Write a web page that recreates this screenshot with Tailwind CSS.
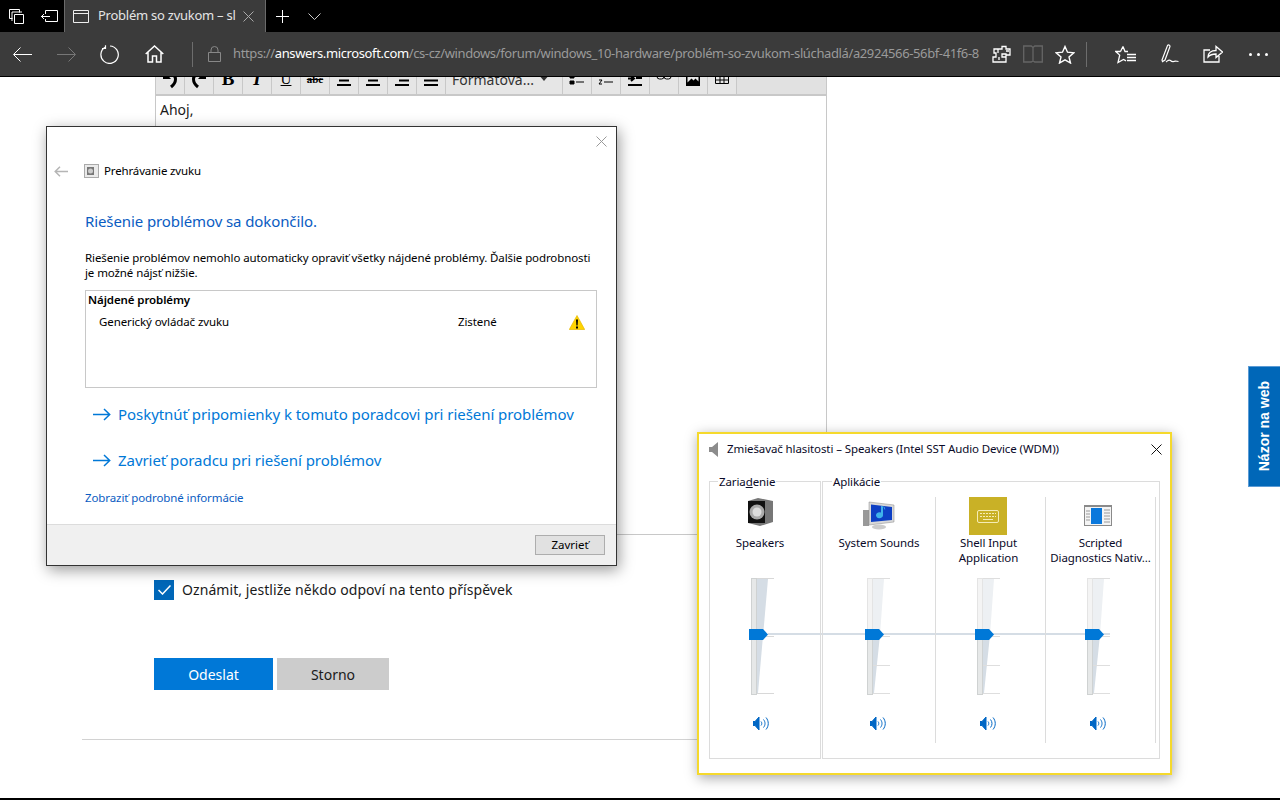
<!DOCTYPE html>
<html lang="sk">
  <head>
    <meta charset="UTF-8" />
    <title>Problém so zvukom</title>
    <script src="https://cdn.jsdelivr.net/npm/@tailwindcss/browser@4"></script>
  </head>
  <body class="w-[1280px] h-[800px] overflow-hidden bg-white font-['Noto_Sans',sans-serif] flex flex-col">
    <!-- TABS -->
    <div class="h-8 bg-black flex text-white shrink-0">
      <div class="w-16 flex items-center pl-[9px] gap-[17px]">
        <svg width="15" height="15" viewBox="0 0 15 15" fill="none" stroke="#fff"><path d="M.5 .5h10v3M.5 .5v9h3M3 3h10M3 3v9M5.500 5.500h9v9h-9z"/></svg>
        <svg width="17" height="13" viewBox="0 0 17 13" fill="none" stroke="#fff"><path d="M4.500 .5h12v11h-12V9M4.500 4V.5M0 6.500h9M3 4 .5 6.500 3 9"/></svg>
      </div>
      <div class="w-[202px] bg-[#3b3b3b] border-x border-[#6a6a6a] flex items-center pl-[8px]">
        <svg width="17" height="13" viewBox="0 0 17 13" fill="none" stroke="#eee"><path d="M.5 .5h15v12H.5zM.5 3.500h15"/></svg>
        <span class="ml-[8px] text-[13px] tracking-[-0.25px] text-[#e4e4e4] w-[137px] whitespace-nowrap">Problém so zvukom – sl</span>
        <svg class="ml-[8px]" width="11" height="11" viewBox="0 0 11 11" stroke="#aaa"><path d="m.5 .5 10 10M10.500 .5l-10 10"/></svg>
      </div>
      <div class="flex items-center pl-[10px] gap-[19px]">
        <svg width="13" height="13" viewBox="0 0 13 13" stroke="#fff"><path d="M6.500 0v13M0 6.500h13"/></svg>
        <svg width="13" height="7" viewBox="0 0 13 7" fill="none" stroke="#ccc"><path d="m.5 .5 6 6 6-6"/></svg>
      </div>
    </div>

    <!-- TOOLBAR -->
    <header class="h-[45px] bg-[#3b3b3b] border-b border-black flex items-center shrink-0 relative z-20">
      <div class="flex items-center w-[192px]">
        <svg class="ml-[13px]" width="19" height="15" viewBox="0 0 19 15" fill="none" stroke="#fff"><path d="M19 7.500H1M7.500 .5l-7 7 7 7"/></svg>
        <svg class="ml-[25px]" width="19" height="15" viewBox="0 0 19 15" fill="none" stroke="#777"><path d="M0 7.500h18M11.500 .5l7 7-7 7"/></svg>
        <svg class="ml-[24px]" width="19" height="19" viewBox="0 0 19 19" fill="none" stroke="#fff" stroke-width="1.200"><path d="M5 2.300A8.700 8.700 0 1 0 10 1M5.500 .2v3.300H2"/></svg>
        <svg class="ml-[26px]" width="19" height="18" viewBox="0 0 19 18" fill="none" stroke="#fff" stroke-width="1.500"><path d="m.7 9 8.800-8 8.800 8M3 7v10h4.500v-6h4v6H16V7"/></svg>
      </div>
      <div class="w-px h-[25px] bg-[#6d6d6d]"></div>
      <svg class="ml-[15px]" width="13" height="16" viewBox="0 0 13 16" fill="none" stroke="#888"><path d="M.5 6.500h12v9H.5zM3 6.500V4a3.500 3.500 0 0 1 7 0v2.500"/></svg>
      <div class="ml-[12px] w-[750px] text-[13px] tracking-[-0.38px] text-[#9a9a9a] whitespace-nowrap">https://<span class="text-white">answers.microsoft.com</span>/cs-cz/windows/forum/windows_10-hardware/problém-so-zvukom-slúchadlá/a2924566-56bf-41f6-8</div>
      <svg class="ml-[9px]" width="20" height="19" viewBox="0 0 20 19" fill="none" stroke="#fff" stroke-width="1.300"><path d="M2 4h8V1.500h4V4h4v6h-4v7H1v-5h3V8H2zM6 4v4M10 9h4v3h-4zM7 12v3M14 6h3"/></svg>
      <svg class="ml-[11px]" width="20" height="18" viewBox="0 0 20 18" fill="none" stroke="#666" stroke-width="1.300"><path d="M.7 1h7.500l1.800 1.500L11.800 1h7.500v16h-7.500l-1.800-1-1.800 1H.7zM10 2.500V16"/></svg>
      <svg class="ml-[12px]" width="20" height="19" viewBox="0 0 20 19" fill="none" stroke="#fff" stroke-width="1.400"><path d="m10 1.500 2.500 5.700 6.300.6-4.800 4.100 1.500 6.100-5.500-3.200L4.500 18 6 11.900 1.200 7.800l6.300-.6z"/></svg>
      <div class="ml-[11px] w-px h-[25px] bg-[#6d6d6d]"></div>
      <svg class="ml-[28px]" width="21" height="19" viewBox="0 0 21 19" fill="none" stroke="#fff" stroke-width="1.300"><path d="M8 1.500 10 6.500h3M5.500 6.500H.8l3.900 3.600L3 17.500l5.500-3 2.500 1.300M8 1.500 5.500 6.500M12 9.500h9M12 12.500h9M12 15.500h9"/></svg>
      <svg class="ml-[25px]" width="18" height="20" viewBox="0 0 18 20" fill="none" stroke="#fff" stroke-width="1.200"><path d="M1 16 6.500 1.500c1-1 2.500-.5 2.500 1L4 16l-2.500 1.500zM5 18c2-1.500 3-3 4.500-1.500s2.500 1.500 5 .5l3 .5"/></svg>
      <svg class="ml-[24px]" width="20" height="18" viewBox="0 0 20 18" fill="none" stroke="#fff" stroke-width="1.300"><path d="M16 11v6H1V5h6M5 12c0-4 3-6.500 8-6.500V1.500l6.500 5.500-6.500 5.500V9c-3.500 0-6 .7-8 3z"/></svg>
      <div class="ml-[26px] flex gap-[5px]">
        <div class="w-[3px] h-[3px] rounded-full bg-white"></div>
        <div class="w-[3px] h-[3px] rounded-full bg-white"></div>
        <div class="w-[3px] h-[3px] rounded-full bg-white"></div>
      </div>
    </header>

    <!-- PAGE -->
    <main class="relative flex-1 overflow-hidden border-b-2 border-black text-[#1a1a1a]">
      <div class="ml-[155px] w-[672px] h-[471px] -mt-[13px] border-x border-b border-[#c8c8c8]">
        <div class="h-[32px] bg-[#e1e1e1] border-b-2 border-[#c8c8c8] flex text-black">
          <div class="w-[29px] border-r border-[#c8c8c8] bg-[#e6e6e6] flex items-center justify-center"><svg width="16" height="20" viewBox="0 0 16 20" fill="none" stroke="#000" stroke-width="3"><path d="M1 6h8c6 0 6 7 0 12"/><path d="M1 1v9h8z" fill="#000" stroke="none"/></svg></div>
          <div class="w-[29px] border-r border-[#c8c8c8] bg-[#e6e6e6] flex items-center justify-center"><svg width="16" height="20" viewBox="0 0 16 20" fill="none" stroke="#000" stroke-width="3"><path d="M15 6H7C1 6 1 13 7 18"/><path d="M15 1v9H7z" fill="#000" stroke="none"/></svg></div>
          <div class="w-[29px] border-r border-[#c8c8c8] bg-[#e6e6e6] flex items-center justify-center font-['Liberation_Serif',serif] font-bold text-[19px]">B</div>
          <div class="w-[29px] border-r border-[#c8c8c8] bg-[#e6e6e6] flex items-center justify-center font-['Liberation_Serif',serif] font-bold italic text-[19px]">I</div>
          <div class="w-[29px] border-r border-[#c8c8c8] bg-[#e6e6e6] flex items-center justify-center font-['Liberation_Serif',serif] text-[15px] underline">U</div>
          <div class="w-[29px] border-r border-[#c8c8c8] bg-[#e6e6e6] flex items-center justify-center font-['Liberation_Serif',serif] text-[11px] font-bold line-through">abc</div>
          <div class="w-[29px] border-r border-[#c8c8c8] bg-[#e6e6e6] flex items-center justify-center"><svg width="16" height="18" viewBox="0 0 16 18" stroke="#000" stroke-width="2"><path d="M1 6h14M3 10.500h10M1 15h14"/></svg></div>
          <div class="w-[29px] border-r border-[#c8c8c8] bg-[#e6e6e6] flex items-center justify-center"><svg width="16" height="18" viewBox="0 0 16 18" stroke="#000" stroke-width="2"><path d="M1 6h14M3 10.500h10M1 15h14"/></svg></div>
          <div class="w-[29px] border-r border-[#c8c8c8] bg-[#e6e6e6] flex items-center justify-center"><svg width="16" height="18" viewBox="0 0 16 18" stroke="#000" stroke-width="2"><path d="M1 6h14M5 10.500h10M1 15h14"/></svg></div>
          <div class="w-[29px] border-r border-[#c8c8c8] bg-[#e6e6e6] flex items-center justify-center"><svg width="16" height="18" viewBox="0 0 16 18" stroke="#000" stroke-width="2"><path d="M1 6h14M1 10.500h14M1 15h14"/></svg></div>
          <div class="w-[117px] border-r border-[#c8c8c8] bg-[#e6e6e6] flex items-center pl-[6px] text-[14px] text-[#333]">Formatova...<svg class="ml-[4px] mb-[4px]" width="12" height="7" viewBox="0 0 12 7"><path d="M0 0h12L6 7z" fill="#333"/></svg></div>
          <div class="w-[29px] border-r border-[#c8c8c8] bg-[#e6e6e6] flex items-center justify-center"><svg width="16" height="16" viewBox="0 0 16 16" stroke="#000"><path d="M1 4h4v3H1zM1 10h4v3H1z" fill="#000"/><path d="M7 5h8M7 11h8"/></svg></div>
          <div class="w-[29px] border-r border-[#c8c8c8] bg-[#e6e6e6] flex items-center justify-center"><svg width="16" height="16" viewBox="0 0 16 16" stroke="#000"><path d="M2 2v4M1 9h3l-3 4h3" fill="none"/><path d="M6 5h9M6 11h9"/></svg></div>
          <div class="w-[29px] border-r border-[#c8c8c8] bg-[#e6e6e6] flex items-center justify-center"><svg width="16" height="16" viewBox="0 0 16 16" stroke="#000" stroke-width="2"><path d="M1 2h14M9 7h6M1 14h14M1 7.500h5M4 5l3 2.500L4 10" fill="none"/></svg></div>
          <div class="w-[29px] border-r border-[#c8c8c8] bg-[#e6e6e6] flex items-center justify-center"><svg width="16" height="16" viewBox="0 0 16 16" fill="none" stroke="#000"><rect x="1" y="3" width="7" height="5" rx="2.500"/><rect x="8" y="3" width="7" height="5" rx="2.500"/><path d="M5 5.500h6"/></svg></div>
          <div class="w-[29px] border-r border-[#c8c8c8] bg-[#e6e6e6] flex items-center justify-center"><svg width="16" height="16" viewBox="0 0 16 16"><path d="M1 1h14v14H1zM2.500 2.500v9l4-4 2 2 2-2 3 3v-8z" fill="#000" fill-rule="evenodd"/></svg></div>
          <div class="w-[29px] border-r border-[#c8c8c8] bg-[#e6e6e6] flex items-center justify-center"><svg width="16" height="16" viewBox="0 0 16 16" fill="none" stroke="#000"><path d="M1.500 2.500h13v10h-13zM1.500 5.500h13M1.500 9h13M6 2.500v10M10 2.500v10"/></svg></div>
        </div>
        <p class="pl-[4px] pt-[2px] text-[14px] leading-[24px]">Ahoj,</p>
      </div>

      <label class="ml-[154px] mt-[45px] flex items-center gap-2 text-[14px] tracking-[0.07px] leading-[20px]">
        <span class="w-5 h-5 bg-[#0067b8] flex items-center justify-center">
          <svg width="13" height="10" viewBox="0 0 13 10" fill="none" stroke="#fff" stroke-width="1.500"><path d="m.5 5 4 4 8-8.500"/></svg>
        </span>
        Oznámit, jestliže někdo odpoví na tento příspěvek
      </label>

      <div class="ml-[154px] mt-[58px] flex gap-1 text-[14px]">
        <button class="w-[119px] h-8 bg-[#0078d7] text-white">Odeslat</button>
        <button class="w-[112px] h-8 bg-[#cccccc] text-[#1a1a1a]">Storno</button>
      </div>

      <div class="ml-[82px] mt-[49px] w-[640px] border-t border-[#d2d2d2]"></div>

      <!-- feedback tab -->
      <div class="absolute right-0 top-[289px] w-8 h-[121px] bg-[#0067b8] border border-[#5b9bd5] border-r-0 flex items-center justify-center">
        <span class="[writing-mode:vertical-rl] rotate-180 text-white font-['Liberation_Sans',sans-serif] text-[14px] font-bold">Názor na web</span>
      </div>

      <!-- TROUBLESHOOTER WINDOW -->
      <section class="absolute left-[46px] top-[49px] w-[571px] h-[440px] bg-white border border-[#333] shadow-[2px_4px_14px_rgba(0,0,0,0.4)] flex flex-col text-black">
        <div class="h-[397px] pl-[38px]">
          <div class="h-7 flex items-center justify-end pr-[9px]">
            <svg width="11" height="11" viewBox="0 0 11 11" stroke="#999"><path d="m.5 .5 10 10M10.500 .5l-10 10"/></svg>
          </div>
          <div class="h-8 -ml-[31px] flex items-center">
            <svg width="14" height="11" viewBox="0 0 14 11" fill="none" stroke="#b5b5b5" stroke-width="1.500"><path d="M14 5.500H1.500M6 .7 1.200 5.500 6 10.300"/></svg>
            <svg class="ml-[16px]" width="15" height="14" viewBox="0 0 15 14"><rect x=".5" y=".5" width="14" height="13" fill="#eaeaea" stroke="#aaa"/><rect x="3" y="3" width="7" height="8" fill="#777"/><circle cx="6.500" cy="7" r="2.500" fill="#ccc"/></svg>
            <span class="ml-[5px] text-[11.500px] tracking-[-0.15px]">Prehrávanie zvuku</span>
          </div>
          <h2 class="mt-[22px] h-6 leading-6 text-[15px] tracking-[-0.1px] text-[#0a5cc2]">Riešenie problémov sa dokončilo.</h2>
          <p class="mt-[17px] w-[512px] text-[11.500px] leading-[15px] tracking-[-0.1px]">Riešenie problémov nemohlo automaticky opraviť všetky nájdené problémy. Ďalšie podrobnosti je možné nájsť nižšie.</p>
          <div class="mt-[10px] w-[512px] h-[98px] border border-[#c8c8c8] pl-[2px] text-[11.500px] tracking-[-0.1px]">
            <div class="h-[17px] leading-[17px] font-semibold">Nájdené problémy</div>
            <div class="mt-[6px] h-[16px] flex items-center pl-[11px] leading-[16px]">
              <span class="w-[359px]">Generický ovládač zvuku</span>
              <span class="w-[111px]">Zistené</span>
              <svg width="16" height="15" viewBox="0 0 16 15"><path d="M8 .5 15.700 14.500H.3z" fill="#ffd400" stroke="#e5b800" stroke-width=".7"/><path d="M7 4.500h2l-.4 6h-1.200zM7 11.500h2v2H7z" fill="#000"/></svg>
            </div>
          </div>
          <a class="mt-[11px] h-[30px] ml-[8px] flex items-center text-[15px] tracking-[-0.05px] text-[#0078d7]">
            <svg width="18" height="13" viewBox="0 0 18 13" fill="none" stroke="#0078d7" stroke-width="1.500"><path d="M0 6.500h16.500M11 1l5.700 5.500L11 12"/></svg>
            <span class="ml-[7px]">Poskytnúť pripomienky k tomuto poradcovi pri riešení problémov</span>
          </a>
          <a class="mt-4 h-[30px] ml-[8px] flex items-center text-[15px] tracking-[-0.05px] text-[#0078d7]">
            <svg width="18" height="13" viewBox="0 0 18 13" fill="none" stroke="#0078d7" stroke-width="1.500"><path d="M0 6.500h16.500M11 1l5.700 5.500L11 12"/></svg>
            <span class="ml-[7px]">Zavrieť poradcu pri riešení problémov</span>
          </a>
          <a class="block mt-4 h-[14px] leading-[14px] text-[11.500px] tracking-[-0.1px] text-[#0a5cc2]">Zobraziť podrobné informácie</a>
        </div>
        <div class="flex-1 bg-[#f0f0f0] border-t border-[#dcdcdc] flex items-center justify-end pr-[11px]">
          <button class="w-[70px] h-5 bg-[#e1e1e1] border border-[#adadad] text-[11.500px] leading-none">Zavrieť</button>
        </div>
      </section>

      <!-- VOLUME MIXER WINDOW -->
      <section class="absolute left-[697px] top-[355px] w-[475px] h-[343px] bg-white border-2 border-[#f5d92c] shadow-[1px_3px_12px_rgba(0,0,0,0.35)] text-[#0a0a28] text-[11.500px] tracking-[-0.1px]">
        <div class="h-[30px] flex items-center pl-[10px]">
          <svg width="9" height="15" viewBox="0 0 9 15"><path d="M0 5h3l6-5v15l-6-5H0z" fill="#8c8c8c"/></svg>
          <span class="ml-[9px] w-[424px]">Zmiešavač hlasitosti – Speakers (Intel SST Audio Device (WDM))</span>
          <svg width="11" height="11" viewBox="0 0 11 11" stroke="#111"><path d="m.5 .5 10 10M10.500 .5l-10 10"/></svg>
        </div>
        <div class="relative mt-[17px] ml-[10px] flex gap-px h-[278px]">
          <!-- connecting line of the sliders -->
          <div class="absolute left-[59px] top-[152px] w-[342px] h-[2px] bg-[#d5dde5]"></div>

          <fieldset class="relative w-[112px] border border-[#dcdcdc] flex flex-col">
            <span class="absolute -top-[8px] left-[8px] bg-white px-px leading-[15px]">Zaria<span class="underline">d</span>enie</span>
            <div class="h-[38px] mt-[15px] pt-px flex justify-center pr-[8px]">
              <svg width="26" height="28" viewBox="0 0 26 28"><path d="M0 3 10 0l15 3v21l-13 4L0 25z" fill="#777"/><path d="M0 3h17v22H0z" fill="#111"/><circle cx="9" cy="14" r="7.500" fill="#aaa"/><circle cx="9" cy="14" r="4.500" fill="#ddd"/></svg>
            </div>
            <div class="h-[30px] text-center pr-[10px] leading-[15px]">Speakers</div>
            <div class="pl-[39px] mt-[10px]">
              <svg class="relative" width="28" height="122" viewBox="0 0 28 122"><path d="M8 4h11L9 118H8z" fill="#d5dde5"/><path d="M8 3.500h17M8 61.500h17M8 118.500h17" stroke="#d8d8d8"/><rect x="2.500" y="3.500" width="5" height="116" fill="#e6e8e8" stroke="#cfd2d2"/><path d="M0 54h14l5 5.500-5 5.500H0z" fill="#0078d7"/></svg>
            </div>
            <svg class="ml-[43px] mt-[19px]" width="16" height="15" viewBox="0 0 16 15" fill="none" stroke="#0067c5"><path d="M0 5.500h2L6 1v13L2 9.500H0z" fill="#0067c5"/><path d="M8 5.500c1 1 1 3 0 4M10.500 3.500c2 2.500 2 5.500 0 8M13 1.500c3 3.500 3 8.500 0 12"/></svg>
          </fieldset>

          <fieldset class="relative w-[338px] border border-[#dcdcdc] flex">
            <span class="absolute -top-[8px] left-[9px] bg-white px-px leading-[15px]">Aplikácie</span>

            <div class="w-[113px] mt-[15px] h-[246px] border-r border-[#dcdcdc] flex flex-col">
              <div class="h-[38px] pt-[3px] flex justify-center">
                <svg width="32" height="30" viewBox="0 0 32 30"><path d="M0 10h6v16H0z" fill="#999"/><path d="M6 2 31 5v17L6 25z" fill="#d8d8d8" stroke="#888" stroke-width=".5"/><path d="M8 4.500 29 7v13L8 22z" fill="#0d3fc4"/><path d="M20 6v9a3.500 3 0 1 1-2-2.500V6c2 0 5 1 4 4-1-2-1.500-3-2-4z" fill="#3fb2ea"/><ellipse cx="16" cy="27" rx="7" ry="2.500" fill="#ccc"/></svg>
              </div>
              <div class="h-[30px] text-center leading-[15px]">System Sounds</div>
              <div class="pl-[42px] mt-[10px]">
                <svg class="relative" width="28" height="122" viewBox="0 0 28 122"><path d="M8 4h11l-4 56H8z" fill="#edf0f3"/><path d="M8 60h7L9 118H8z" fill="#d5dde5"/><path d="M8 3.500h17M8 61.500h17M8 90.500h17M8 118.500h17" stroke="#dedede"/><rect x="2.500" y="3.500" width="5" height="57" fill="#f4f4f4" stroke="#e4e4e4"/><rect x="2.500" y="60.500" width="5" height="59" fill="#e6e8e8" stroke="#cfd2d2"/><path d="M0 54h14l5 5.500-5 5.500H0z" fill="#0078d7"/></svg>
              </div>
              <svg class="ml-[47px] mt-[19px]" width="16" height="15" viewBox="0 0 16 15" fill="none" stroke="#0067c5"><path d="M0 5.500h2L6 1v13L2 9.500H0z" fill="#0067c5"/><path d="M8 5.500c1 1 1 3 0 4M10.500 3.500c2 2.500 2 5.500 0 8M13 1.500c3 3.500 3 8.500 0 12"/></svg>
            </div>

            <div class="w-[110px] mt-[15px] h-[246px] border-r border-[#dcdcdc] flex flex-col">
              <div class="h-[38px] flex justify-center pr-[6px]">
                <div class="w-[38px] h-[38px] bg-[#c9b126] flex items-center justify-center">
                  <svg width="22" height="13" viewBox="0 0 22 13" fill="none" stroke="#f5ecb5"><rect x=".5" y=".5" width="21" height="12" rx="1.500"/><path d="M3 3.500h16M3 6.500h16" stroke-dasharray="2 1"/><path d="M6 9.500h10"/></svg>
                </div>
              </div>
              <div class="h-[30px] text-center pr-[4px] leading-[15px]">Shell Input<br />Application</div>
              <div class="pl-[39px] mt-[10px]">
                <svg class="relative" width="28" height="122" viewBox="0 0 28 122"><path d="M8 4h11l-4 56H8z" fill="#edf0f3"/><path d="M8 60h7L9 118H8z" fill="#d5dde5"/><path d="M8 3.500h17M8 61.500h17M8 90.500h17M8 118.500h17" stroke="#dedede"/><rect x="2.500" y="3.500" width="5" height="57" fill="#f4f4f4" stroke="#e4e4e4"/><rect x="2.500" y="60.500" width="5" height="59" fill="#e6e8e8" stroke="#cfd2d2"/><path d="M0 54h14l5 5.500-5 5.500H0z" fill="#0078d7"/></svg>
              </div>
              <svg class="ml-[44px] mt-[19px]" width="16" height="15" viewBox="0 0 16 15" fill="none" stroke="#0067c5"><path d="M0 5.500h2L6 1v13L2 9.500H0z" fill="#0067c5"/><path d="M8 5.500c1 1 1 3 0 4M10.500 3.500c2 2.500 2 5.500 0 8M13 1.500c3 3.500 3 8.500 0 12"/></svg>
            </div>

            <div class="w-[110px] mt-[15px] h-[246px] border-r border-[#dcdcdc] flex flex-col">
              <div class="h-[38px] pt-2 flex justify-center pr-[6px]">
                <svg width="28" height="21" viewBox="0 0 28 21"><rect width="28" height="21" fill="#8a8a8a"/><rect x="1" y="2" width="26" height="18" fill="#f4f4f4"/><rect x="7" y="3" width="11" height="16" fill="#0a78dc"/><path d="M2 6h4M2 9h4M2 12h4M2 15h4M20 5h6M20 8h6M20 11h6M20 14h6M20 17h6" stroke="#9a9a9a"/></svg>
              </div>
              <div class="h-[30px] text-center leading-[15px] whitespace-nowrap">Scripted<br />Diagnostics Nativ...</div>
              <div class="pl-[39px] mt-[10px]">
                <svg class="relative" width="28" height="122" viewBox="0 0 28 122"><path d="M8 4h11l-4 56H8z" fill="#edf0f3"/><path d="M8 60h7L9 118H8z" fill="#d5dde5"/><path d="M8 3.500h17M8 61.500h17M8 90.500h17M8 118.500h17" stroke="#dedede"/><rect x="2.500" y="3.500" width="5" height="57" fill="#f4f4f4" stroke="#e4e4e4"/><rect x="2.500" y="60.500" width="5" height="59" fill="#e6e8e8" stroke="#cfd2d2"/><path d="M0 54h14l5 5.500-5 5.500H0z" fill="#0078d7"/></svg>
              </div>
              <svg class="ml-[44px] mt-[19px]" width="16" height="15" viewBox="0 0 16 15" fill="none" stroke="#0067c5"><path d="M0 5.500h2L6 1v13L2 9.500H0z" fill="#0067c5"/><path d="M8 5.500c1 1 1 3 0 4M10.500 3.500c2 2.500 2 5.500 0 8M13 1.500c3 3.500 3 8.500 0 12"/></svg>
            </div>
          </fieldset>
        </div>
      </section>
    </main>
  </body>
</html>
